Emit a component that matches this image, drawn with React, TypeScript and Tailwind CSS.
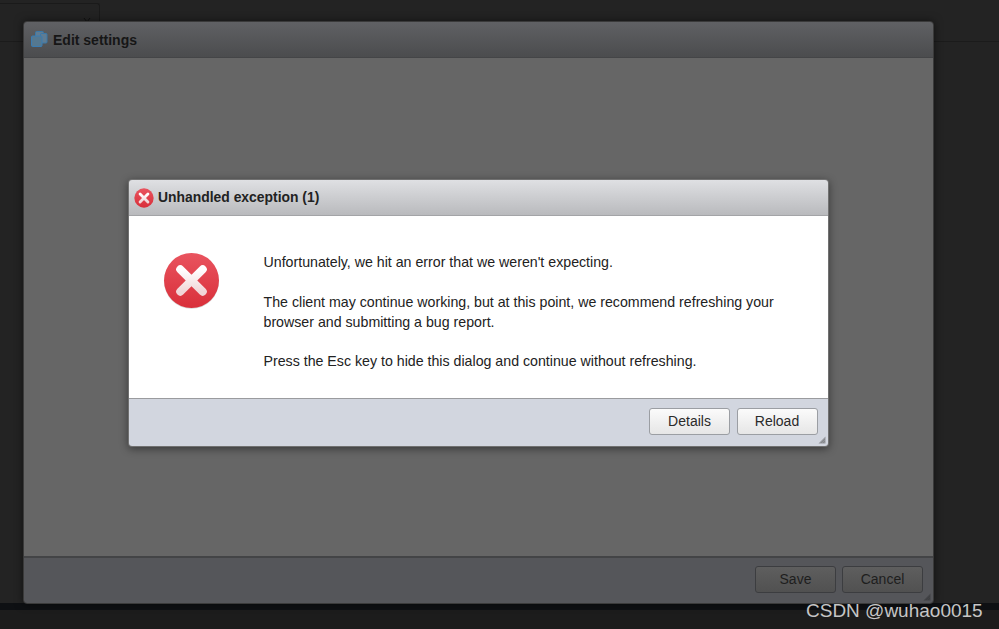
import React from "react";

function ErrorIcon({ size, id }: { size: number; id: string }) {
  return (
    <svg width={size} height={size} viewBox="0 0 56 56" className="shrink-0">
      <defs>
        <linearGradient id={id + "r"} x1="0" y1="0" x2="0" y2="1">
          <stop offset="0" stopColor="#e9545f" />
          <stop offset="1" stopColor="#d92f3a" />
        </linearGradient>
        <linearGradient id={id + "x"} x1="0" y1="0" x2="0" y2="1">
          <stop offset="0" stopColor="#ffffff" />
          <stop offset="1" stopColor="#f1d6d8" />
        </linearGradient>
      </defs>
      <circle cx="28" cy="28.8" r="27" fill="#b9b9b9" opacity="0.6" />
      <circle cx="28" cy="28" r="27" fill={"url(#" + id + "r)"} />
      <path d="M17 17 L39 39 M39 17 L17 39" stroke={"url(#" + id + "x)"} strokeWidth="8" strokeLinecap="round" fill="none" />
    </svg>
  );
}

function Grip({ color }: { color: string }) {
  return (
    <svg width="8" height="8" viewBox="0 0 8 8" className="absolute right-[2px] bottom-[2px]">
      <path d="M7.5 0.5V7.5H0.5Z" fill={color} opacity="0.75" />
      <path d="M7 3 L3 7 M7 5 L5 7" stroke={color} strokeWidth="0.7" />
    </svg>
  );
}

function Btn({ label, dark }: { label: string; dark?: boolean }) {
  return (
    <button
      className={
        dark
          ? "h-[27px] w-[81px] rounded-[3px] border border-[#3c3d40] bg-gradient-to-b from-[#5e5e5e] to-[#515151] text-[14px] text-[#1e1e1e]"
          : "h-[27px] w-[81px] rounded-[3px] border border-[#9b9ea3] bg-gradient-to-b from-[#fbfbfb] to-[#e6e6e6] text-[14px] text-[#2a2a2a]"
      }
    >
      {label}
    </button>
  );
}

export default function App() {
  return (
    <div className="relative h-[629px] w-[999px] overflow-hidden bg-[#232323] font-['Liberation_Sans',Arial,sans-serif]">
      {/* background page */}
      <div className="h-[42px] border-b border-[#1b1b1b] pt-[3px]">
        <div className="flex h-[30px] w-[100px] justify-end rounded-tr-[3px] border-t border-r border-[#1a1a1a] pt-[14px] pr-[8px]">
          <svg width="8" height="6" viewBox="0 0 8 6">
            <path d="M1 0 L4 4 L7 0" stroke="#111111" strokeWidth="1" fill="none" />
          </svg>
        </div>
      </div>
      <div className="absolute inset-x-0 bottom-0 h-[26px] border-t-[7px] border-[#0e1013] bg-[#1c1c1c]" />

      {/* outer dialog, dimmed */}
      <div className="absolute top-[21px] left-[23px] flex h-[583px] w-[911px] flex-col overflow-hidden rounded-[4px] border border-[#3a3a3a] shadow-[0_0_8px_rgba(0,0,0,0.5)]">
        <div className="flex h-[36px] shrink-0 items-center gap-[5px] border-b border-[#444547] bg-gradient-to-b from-[#606164] to-[#4b4c4e] pl-[6px]">
          <svg width="18" height="18" viewBox="0 0 18 18" className="-mt-[2px]">
            <rect x="5.5" y="1.5" width="8" height="9" rx="1" fill="#5f7c93" stroke="#3a78a8" />
            <rect x="10.5" y="3.5" width="6.5" height="9.5" rx="1" fill="#5f7c93" stroke="#3a78a8" />
            <rect x="1.5" y="6" width="10.5" height="10.5" rx="1" fill="#557890" stroke="#3a7cb2" />
          </svg>
          <span className="mt-[1px] text-[14px] font-bold text-[#161616]">Edit settings</span>
        </div>
        <div className="flex-1 bg-[#666666]" />
        <div className="relative flex h-[47px] shrink-0 items-start justify-end gap-[6px] border-t-2 border-[#434446] bg-[#55565a] pt-[8px] pr-[10px]">
          <Btn label="Save" dark />
          <Btn label="Cancel" dark />
          <Grip color="#3c3d40" />
        </div>
      </div>

      {/* inner dialog */}
      <div className="absolute top-[179px] left-[128px] flex h-[268px] w-[701px] flex-col overflow-hidden rounded-[4px] border border-[#717171] shadow-[0_2px_8px_rgba(0,0,0,0.45)]">
        <div className="flex h-[36px] shrink-0 items-center gap-[4px] border-b border-[#a3a4a7] bg-gradient-to-b from-[#dfe0e3] to-[#b9babd] pl-[5px]">
          <ErrorIcon size={20} id="a" />
          <span className="text-[13.9px] font-bold text-[#222222]">Unhandled exception (1)</span>
        </div>
        <div className="flex flex-1 border-b border-[#9a9b9e] bg-white">
          <div className="w-[134.5px] shrink-0 pt-[36px] pl-[34px]">
            <ErrorIcon size={57} id="b" />
          </div>
          <div className="pt-[36px] text-[14.2px] leading-[20px] text-[#222222]">
            <p>Unfortunately, we hit an error that we weren't expecting.</p>
            <p className="mt-[20px]">
              The client may continue working, but at this point, we recommend refreshing your
              <br />
              browser and submitting a bug report.
            </p>
            <p className="mt-[19px]">Press the Esc key to hide this dialog and continue without refreshing.</p>
          </div>
        </div>
        <div className="relative flex h-[47px] shrink-0 items-start justify-end gap-[6.5px] bg-[#d2d6df] pt-[9px] pr-[10.5px]">
          <Btn label="Details" />
          <Btn label="Reload" />
          <Grip color="#7f8185" />
        </div>
      </div>

      {/* watermark */}
      <div className="absolute top-[600px] left-[806px] text-[19px] leading-[22px] text-[#c6c6c6]">
        CSDN @wuhao0015
      </div>
    </div>
  );
}
